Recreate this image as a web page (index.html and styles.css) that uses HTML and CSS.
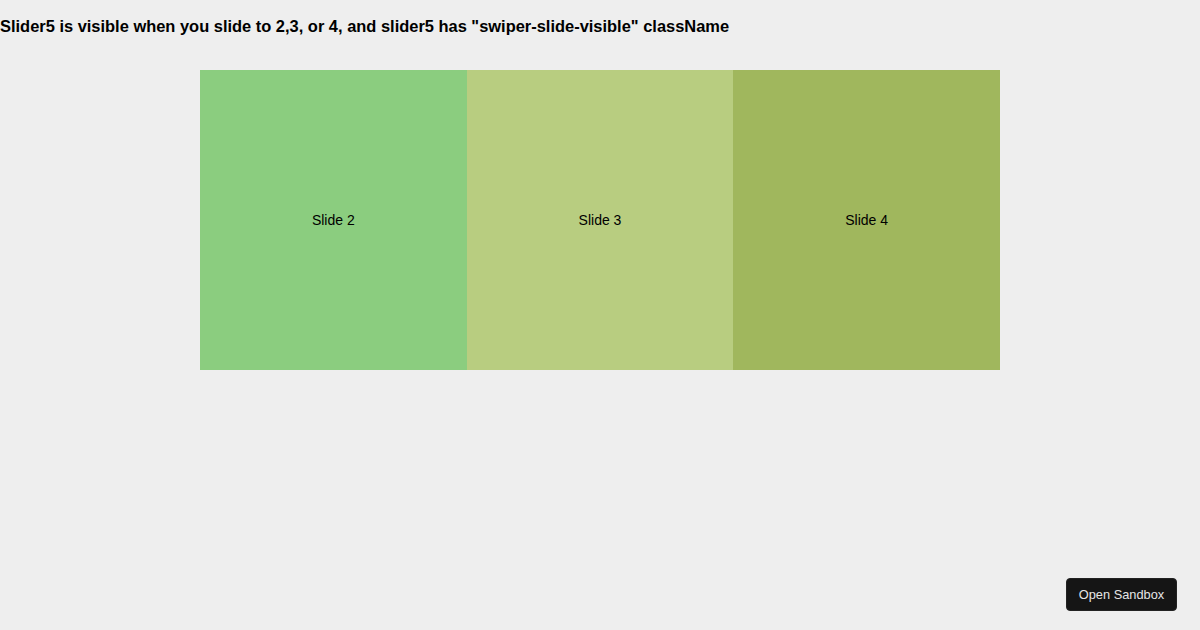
FILE: index.html
```html
<!DOCTYPE html>
<html>
<head>
<meta charset="utf-8">
<link rel="stylesheet" href="styles.css">
</head>
<body>
<h3 class="title">Slider5 is visible when you slide to 2,3, or 4, and slider5 has "swiper-slide-visible" className</h3>
<div class="swiper">
  <div class="slide s2">Slide 2</div>
  <div class="slide s3">Slide 3</div>
  <div class="slide s4">Slide 4</div>
</div>
<button class="sandbox">Open Sandbox</button>
</body>
</html>
```

FILE: styles.css
```css
html, body {
  margin: 0;
  padding: 0;
  background: #eeeeee;
  font-family: "Liberation Sans", Arial, sans-serif;
  height: 100%;
}
.title {
  margin: 0;
  padding-top: 17px;
  font-size: 16.45px;
  font-weight: bold;
  line-height: 18px;
  color: #000;
}
.swiper {
  width: 800px;
  height: 300px;
  margin: 35px auto 0;
  display: flex;
}
.slide {
  flex: 1 1 0;
  display: flex;
  align-items: center;
  justify-content: center;
  font-size: 14px;
  color: #000;
}
.s2 { background: #8bcd7f; }
.s3 { background: #b8cd80; }
.s4 { background: #a0b75d; }
.sandbox {
  position: fixed;
  right: 23px;
  bottom: 19px;
  width: 111px;
  height: 33px;
  background: #151515;
  color: #e6e6e6;
  border: 1px solid #222;
  border-radius: 4px;
  font-family: "Liberation Sans", Arial, sans-serif;
  font-size: 12.8px;
  padding: 0;
}
```
